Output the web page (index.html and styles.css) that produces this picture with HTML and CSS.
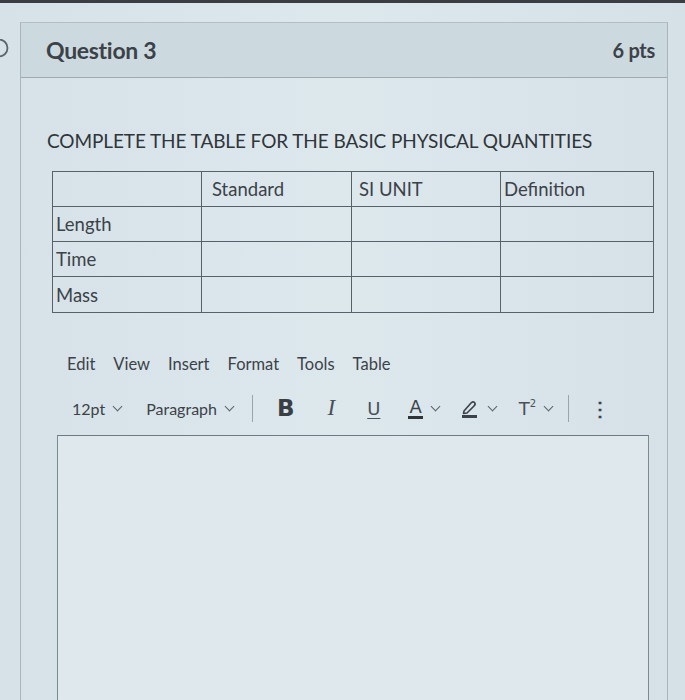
FILE: index.html
```html
<!DOCTYPE html>
<html>
<head>
<meta charset="utf-8">
<link rel="stylesheet" href="styles.css">
</head>
<body>
<div class="topbar"></div>
<div class="page">
  <div class="gutter">
    <svg class="flag" width="20" height="26" viewBox="0 0 20 26"><circle cx="-1" cy="9" r="8.5" fill="none" stroke="#5c656c" stroke-width="1.8"/></svg>
  </div>
  <div class="card">
    <div class="card-head">
      <span class="q-title">Question 3</span>
      <span class="q-pts">6 pts</span>
    </div>
    <div class="card-body">
      <p class="prompt">COMPLETE THE TABLE FOR THE BASIC PHYSICAL QUANTITIES</p>
      <table class="qtable">
        <colgroup><col class="c1"><col class="c2"><col class="c3"><col class="c4"></colgroup>
        <tr class="hrow"><td></td><td class="pad-std">Standard</td><td class="pad-si">SI UNIT</td><td>Definition</td></tr>
        <tr><td>Length</td><td></td><td></td><td></td></tr>
        <tr><td>Time</td><td></td><td></td><td></td></tr>
        <tr class="lrow"><td>Mass</td><td></td><td></td><td></td></tr>
      </table>
      <div class="menubar">
        <span>Edit</span><span>View</span><span>Insert</span><span>Format</span><span>Tools</span><span>Table</span>
      </div>
      <div class="toolbar">
        <span class="tb-item">12pt <i class="chev"></i></span>
        <span class="tb-item para">Paragraph <i class="chev"></i></span>
        <span class="sep"></span>
        <span class="tb-b">B</span>
        <span class="tb-i">I</span>
        <span class="tb-u">U</span>
        <span class="tb-a"><span class="a-letter">A</span><i class="chev"></i></span>
        <span class="tb-pen">
          <svg width="20" height="20" viewBox="0 0 20 20"><path d="M4 13 L11 5 Q13 3 14.5 4.5 Q16 6 14 8 L7 15 L3.5 15.5 Z" fill="none" stroke="#3d4248" stroke-width="1.6" stroke-linejoin="round"/><rect x="2" y="17" width="15" height="3" fill="#3d4248"/></svg>
          <i class="chev"></i>
        </span>
        <span class="tb-t">T<sup>2</sup><i class="chev"></i></span>
        <span class="sep sep2"></span>
        <span class="tb-more">⋮</span>
      </div>
      <div class="editor"></div>
    </div>
  </div>
</div>
</body>
</html>
```
FILE: styles.css
```css
html, body {
  margin: 0;
  padding: 0;
}
body {
  width: 685px;
  height: 700px;
  overflow: hidden;
  background: linear-gradient(90deg, #d6e2e8 0%, #dde8ed 50%, #d5e1e7 100%);
  font-family: Lato, "Open Sans", sans-serif;
  color: #3a3f45;
}
.topbar {
  height: 3px;
  background: #3a3d42;
}
.page {
  display: flex;
  padding-top: 19px;
}
.gutter {
  width: 20px;
  flex: none;
}
.flag {
  display: block;
  margin-top: 17px;
}
.card {
  width: 646px;
  height: 678px;
  overflow: hidden;
  border-left: 1px solid #a9b5bc;
  border-right: 1px solid #a9b5bc;
  border-top: 1px solid #b3bec4;
}
.card-head {
  height: 54px;
  background: #ccdae0;
  border-bottom: 1px solid #9ea9b0;
  display: flex;
  align-items: center;
  justify-content: space-between;
  padding: 0 12px 0 25px;
}
.q-title {
  font-size: 23px;
  font-weight: 700;
  color: #3c4248;
  letter-spacing: -0.3px;
}
.q-pts {
  font-size: 20px;
  font-weight: 700;
  color: #3c4248;
  letter-spacing: -0.3px;
}
.card-body {
  padding-left: 26px;
}
.prompt {
  margin: 52px 0 0 0;
  font-size: 19px;
  line-height: 22px;
  color: #30353a;
  letter-spacing: -0.1px;
}
.qtable {
  margin-top: 19px;
  margin-left: 5px;
  border-collapse: collapse;
  width: 601px;
  table-layout: fixed;
}
.qtable col.c1 { width: 149px; }
.qtable col.c2 { width: 150px; }
.qtable col.c3 { width: 149px; }
.qtable col.c4 { width: 153px; }
.qtable td {
  border: 1.5px solid #56616a;
  height: 34px;
  padding: 0 0 0 3px;
  font-size: 18.5px;
  color: #3c4248;
  vertical-align: middle;
  white-space: nowrap;
}
.qtable .hrow td { height: 34px; }
.qtable .lrow td { height: 35px; }
.qtable td.pad-std { padding-left: 10px; }
.qtable td.pad-si { padding-left: 7px; }
.menubar {
  display: flex;
  margin-top: 41px;
  margin-left: 20px;
  font-size: 16.5px;
  color: #3c4248;
  height: 20px;
  line-height: 20px;
}
.menubar span { margin-right: 18px; }
.toolbar {
  display: flex;
  align-items: center;
  margin-top: 19px;
  margin-left: 25px;
  height: 30px;
  font-size: 16px;
  color: #3c4248;
}
.tb-item {
  display: flex;
  align-items: center;
}
.para { margin-left: 25px; }
.chev {
  display: inline-block;
  width: 6px;
  height: 6px;
  border-right: 1.3px solid #5a636b;
  border-bottom: 1.3px solid #5a636b;
  transform: rotate(45deg);
  margin: -4px 0 0 9px;
}
.sep {
  width: 1px;
  height: 27px;
  background: #9aa4ab;
  margin-left: 19px;
}
.tb-b {
  font-family: "DejaVu Sans", sans-serif;
  font-weight: 700;
  font-size: 23px;
  margin-left: 24px;
  color: #3a3f45;
}
.tb-i {
  font-family: "Liberation Serif", serif;
  font-style: italic;
  font-size: 23px;
  margin-left: 33px;
  color: #4a5057;
}
.tb-u {
  font-family: "DejaVu Sans", sans-serif;
  font-size: 18px;
  text-decoration: underline;
  text-underline-offset: 3px;
  margin-left: 32px;
  color: #4a5057;
}
.tb-a {
  display: flex;
  align-items: center;
  margin-left: 28px;
}
.a-letter {
  font-family: "DejaVu Sans", sans-serif;
  font-size: 18px;
  color: #3d4248;
  border-bottom: 3px solid #2f3439;
  line-height: 18px;
  padding: 0 1px;
}
.tb-pen {
  display: flex;
  align-items: center;
  margin-left: 21px;
}
.tb-t {
  display: flex;
  align-items: center;
  margin-left: 23px;
  font-family: "DejaVu Sans", sans-serif;
  font-size: 18px;
  color: #4a5057;
}
.tb-t sup {
  font-size: 10px;
  margin-top: -9px;
}
.sep2 { margin-left: 16px; }
.tb-more {
  margin-left: 21px;
  font-size: 20px;
  font-weight: 700;
  color: #3d4248;
}
.editor {
  margin-top: 12px;
  margin-left: 10px;
  width: 590px;
  height: 300px;
  border: 1.5px solid #7d8990;
  border-top-color: #6e7a82;
  background: #dfe8ec;
}
```
